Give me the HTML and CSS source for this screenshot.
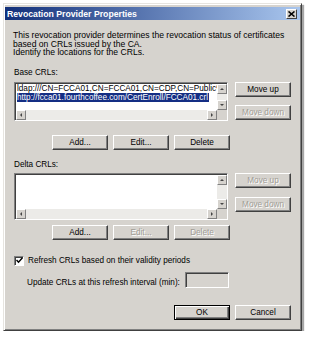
FILE: index.html
```html
<!DOCTYPE html>
<html lang="en">
<head>
  <meta charset="UTF-8">
  <title>Revocation Provider Properties</title>
  <link rel="stylesheet" href="styles.css">
</head>
<body>
  <div class="window">
    <div class="titlebar">
      <span class="title">Revocation Provider Properties</span>
      <span class="close">
        <svg width="7" height="6" viewBox="0 0 7 6"><path d="M0.5 0.5 L6.5 5.5 M6.5 0.5 L0.5 5.5" stroke="#000" stroke-width="1.6"/></svg>
      </span>
    </div>
    <div class="content">
      <p class="intro">This revocation provider determines the revocation status of certificates<br>based on CRLs issued by the CA.<br>Identify the locations for the CRLs.</p>

      <div class="label base-label">Base CRLs:</div>
      <div class="list-row">
        <div class="listbox base-list">
          <div class="items">
            <div class="item">ldap:///CN=FCCA01,CN=FCCA01,CN=CDP,CN=Public%20Key</div>
            <div class="item"><span class="selected">http://fcca01.fourthcoffee.com/CertEnroll/FCCA01.crl</span></div>
          </div>
          <div class="vscroll">
            <span class="arrow up"></span>
            <span class="track"></span>
            <span class="arrow down"></span>
          </div>
          <div class="hscroll">
            <span class="arrow left"></span>
            <span class="track"></span>
            <span class="arrow right"></span>
          </div>
          <div class="corner"></div>
        </div>
        <div class="side-buttons">
          <button class="btn">Move up</button>
          <button class="btn" disabled>Move down</button>
        </div>
      </div>
      <div class="action-row">
        <button class="btn">Add...</button>
        <button class="btn">Edit...</button>
        <button class="btn">Delete</button>
      </div>

      <div class="label delta-label">Delta CRLs:</div>
      <div class="list-row delta-row">
        <div class="listbox delta-list">
          <div class="items"></div>
          <div class="vscroll">
            <span class="arrow up"></span>
            <span class="track"></span>
            <span class="arrow down"></span>
          </div>
          <div class="hscroll">
            <span class="arrow left"></span>
            <span class="track"></span>
            <span class="arrow right"></span>
          </div>
          <div class="corner"></div>
        </div>
        <div class="side-buttons delta-side">
          <button class="btn" disabled>Move up</button>
          <button class="btn" disabled>Move down</button>
        </div>
      </div>
      <div class="action-row delta-actions">
        <button class="btn">Add...</button>
        <button class="btn" disabled>Edit...</button>
        <button class="btn" disabled>Delete</button>
      </div>

      <div class="check-row">
        <span class="checkbox">
          <svg width="7" height="7" viewBox="0 0 7 7"><path d="M0.5 3 L2.5 5.2 L6.5 0.8" fill="none" stroke="#000" stroke-width="1.5"/></svg>
        </span>
        <span>Refresh CRLs based on their validity periods</span>
      </div>
      <div class="update-row">
        <span class="update-label">Update CRLs at this refresh interval (min):</span>
        <span class="interval"></span>
      </div>

      <div class="dialog-buttons">
        <button class="btn default">OK</button>
        <button class="btn">Cancel</button>
      </div>
    </div>
  </div>
</body>
</html>
```

FILE: styles.css
```css
body {
    margin: 0;
    background-color: #fff;
    font-family: "Liberation Sans", Arial, sans-serif;
    font-size: 8.2px;
    color: #000;
  }

  .window {
    margin: 3px 0 0 3px;
    width: 299px;
    height: 328px;
    box-sizing: border-box;
    background-color: #d6d3ce;
    border: 1px solid;
    border-color: #e6e4e0 #404040 #404040 #e6e4e0;
    box-shadow: inset 1px 1px #fff, inset -1px -1px #808080, 2px 2px 1px rgba(0, 0, 0, 0.35);
    padding: 3px 1px 1px 1px;
  }

  .titlebar {
    height: 13px;
    display: flex;
    align-items: center;
    justify-content: space-between;
    background: linear-gradient(to right, #12307a, #a9c6ee);
  }

  .title {
    padding-left: 2px;
    color: #fff;
    font-weight: bold;
    font-size: 8.7px;
  }

  .close {
    width: 11px;
    height: 10px;
    margin-right: 3px;
    box-sizing: border-box;
    display: flex;
    align-items: center;
    justify-content: center;
    background-color: #d6d3ce;
    border: 1px solid;
    border-color: #fff #404040 #404040 #fff;
  }

  .content {
    padding-left: 9px;
  }

  .intro {
    margin: 11px 0 0 -1px;
    font-size: 8.6px;
    line-height: 8.5px;
  }

  .label {
    height: 8px;
    line-height: 8px;
  }

  .base-label {
    margin-top: 12px;
  }

  .delta-label {
    margin-top: 11px;
  }

  .list-row {
    display: flex;
    gap: 7px;
    margin-top: 5px;
  }

  .delta-row {
    margin-top: 4px;
  }

  .listbox {
    width: 214px;
    box-sizing: border-box;
    display: grid;
    grid-template-columns: 1fr 10px;
    grid-template-rows: 1fr 10px;
    background-color: #fff;
    border: 1px solid;
    border-color: #808080 #fff #fff #808080;
    box-shadow: inset 1px 1px #404040;
    padding: 1px 0 0 1px;
  }

  .base-list {
    height: 39px;
  }

  .delta-list {
    height: 47px;
  }

  .items {
    overflow: hidden;
  }

  .item {
    height: 9px;
    line-height: 9px;
    font-size: 8.2px;
    white-space: nowrap;
    overflow: hidden;
    padding-left: 1px;
  }

  .selected {
    background-color: #142e84;
    color: #fff;
    padding-right: 1px;
  }

  .vscroll {
    display: flex;
    flex-direction: column;
  }

  .hscroll {
    display: flex;
  }

  .track {
    flex: 1;
    background-color: #ecebe8;
  }

  .corner {
    background-color: #d6d3ce;
  }

  .arrow {
    width: 10px;
    height: 10px;
    box-sizing: border-box;
    display: flex;
    align-items: center;
    justify-content: center;
    background-color: #d6d3ce;
    border: 1px solid;
    border-color: #fff #808080 #808080 #fff;
  }

  .arrow::after {
    content: "";
    width: 0;
    height: 0;
  }

  .arrow.up::after {
    border-left: 2px solid transparent;
    border-right: 2px solid transparent;
    border-bottom: 2px solid #444;
  }

  .arrow.down::after {
    border-left: 2px solid transparent;
    border-right: 2px solid transparent;
    border-top: 2px solid #444;
  }

  .arrow.left::after {
    border-top: 2px solid transparent;
    border-bottom: 2px solid transparent;
    border-right: 2px solid #444;
  }

  .arrow.right::after {
    border-top: 2px solid transparent;
    border-bottom: 2px solid transparent;
    border-left: 2px solid #444;
  }

  .side-buttons {
    display: flex;
    flex-direction: column;
    gap: 8px;
  }

  .delta-side {
    gap: 9px;
  }

  .btn {
    width: 56px;
    height: 15px;
    padding: 0;
    box-sizing: border-box;
    font-family: inherit;
    font-size: 8.2px;
    color: #000;
    background-color: #d6d3ce;
    border: 1px solid;
    border-color: #fff #404040 #404040 #fff;
    box-shadow: inset -1px -1px #808080;
  }

  .btn:disabled {
    color: #a19d96;
    text-shadow: 1px 1px #fff;
  }

  .btn.default {
    border-color: #000;
    box-shadow: inset 1px 1px #fff, inset -1px -1px #404040, inset -2px -2px #808080;
  }

  .action-row {
    display: flex;
    gap: 5px;
    margin: 14px 0 0 38px;
  }

  .delta-actions {
    margin-top: 5px;
  }

  .check-row {
    display: flex;
    align-items: center;
    gap: 4px;
    height: 10px;
    margin-top: 16px;
  }

  .checkbox {
    width: 10px;
    height: 10px;
    box-sizing: border-box;
    display: flex;
    align-items: center;
    justify-content: center;
    background-color: #fff;
    border: 1px solid;
    border-color: #808080 #fff #fff #808080;
    box-shadow: inset 1px 1px #404040;
  }

  .update-row {
    display: grid;
    grid-template-columns: 171px 44px;
    margin-top: 6px;
    height: 16px;
  }

  .update-label {
    padding-left: 13px;
    align-self: end;
    line-height: 11px;
  }

  .interval {
    box-sizing: border-box;
    background-color: #d6d3ce;
    border: 1px solid;
    border-color: #808080 #fff #fff #808080;
    box-shadow: inset 1px 1px #404040;
  }

  .dialog-buttons {
    display: flex;
    gap: 5px;
    margin: 17px 0 0 160px;
  }
```
